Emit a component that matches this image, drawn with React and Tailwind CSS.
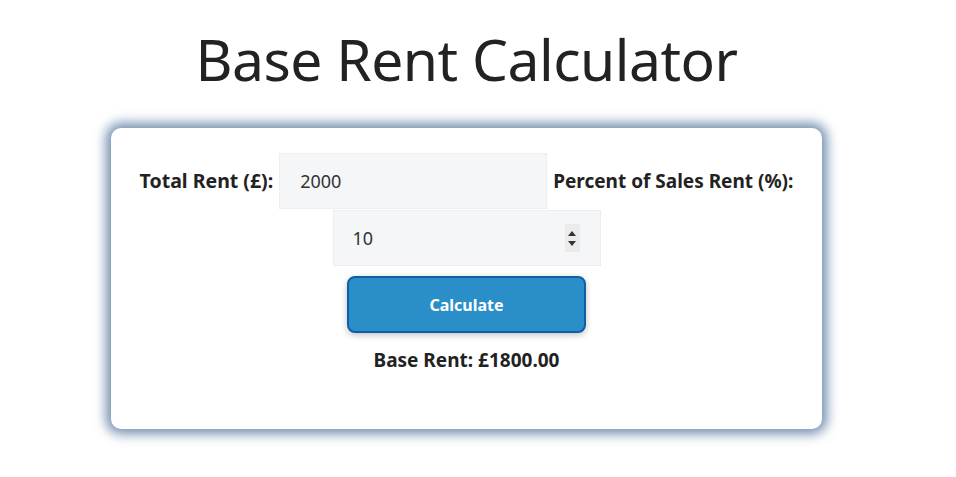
export default function App() {
  const font = { fontFamily: '"Noto Sans", "Open Sans", sans-serif' };
  return (
    <div className="w-[933px] h-[477px] bg-white flex flex-col items-center" style={font}>
      <h1 className="mt-[22px] text-[57px] leading-[74px] font-normal text-[#222] tracking-[-0.5px]">Base Rent Calculator</h1>
      <div className="mt-[32px] w-[711px] h-[301px] bg-white rounded-[10px] shadow-[0_0_12px_5px_rgba(70,105,150,0.75)] flex flex-col items-center pt-[25px]">
        <div className="flex flex-wrap justify-center items-center gap-x-[6px] gap-y-[1px] w-[680px]">
          <label className="text-[19.5px] font-bold text-[#222]">Total Rent (£):</label>
          <input
            type="text"
            defaultValue="2000"
            className="w-[268px] h-[56px] bg-[#f5f6f8] border border-[#eceef1] pl-[20px] text-[18px] text-[#333] outline-none"
          />
          <label className="text-[19px] font-bold text-[#222]">Percent of Sales Rent (%):</label>
          <div className="relative w-[268px] h-[56px]">
            <input
              type="text"
              defaultValue="10"
              className="w-full h-full bg-[#f5f6f8] border border-[#eceef1] pl-[19px] text-[18px] text-[#333] outline-none"
            />
            <div className="absolute left-[232px] top-[14px] w-[15px] h-[28px] bg-[#ebebeb] flex flex-col items-center justify-center gap-[5px]">
              <svg width="8" height="5" viewBox="0 0 8 5"><path d="M4 0 L8 5 L0 5 Z" fill="#333" /></svg>
              <svg width="8" height="5" viewBox="0 0 8 5"><path d="M0 0 L8 0 L4 5 Z" fill="#333" /></svg>
            </div>
          </div>
        </div>
        <button className="mt-[10px] w-[239px] h-[57px] bg-[#2a8fc9] border-2 border-[#0f5ea6] rounded-[8px] text-white font-bold text-[16px] shadow-[0_2px_6px_rgba(0,0,0,0.25)]">
          Calculate
        </button>
        <div className="mt-[13px] text-[19px] font-bold text-[#222]">Base Rent: £1800.00</div>
      </div>
    </div>
  );
}
